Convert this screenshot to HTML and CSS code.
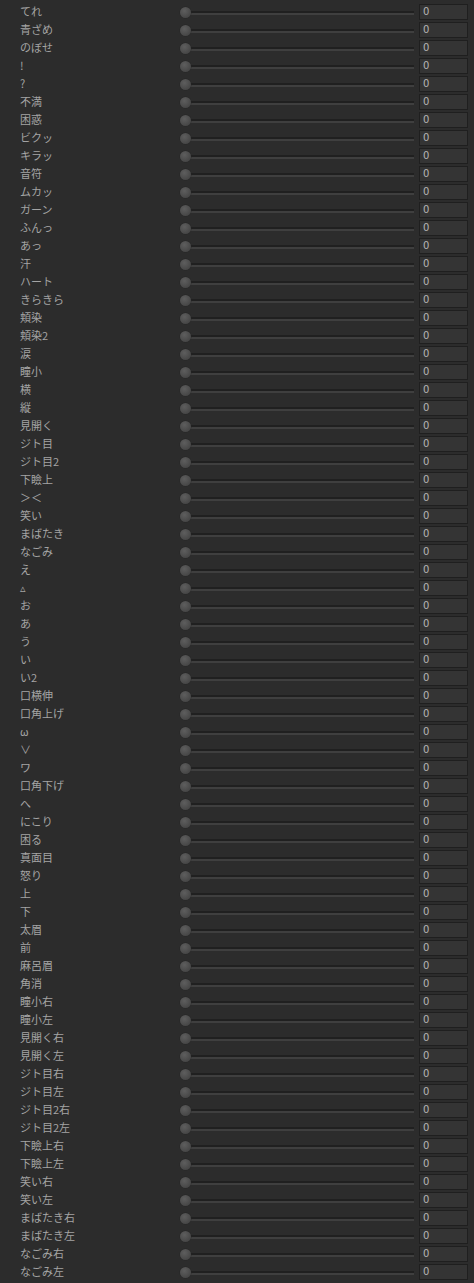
FILE: index.html
```html
<!DOCTYPE html>
<html lang="ja">
<head>
<meta charset="utf-8">
<link rel="stylesheet" href="styles.css">
</head>
<body>
<div class="list" id="list"></div>
<script>
const names = ["てれ","青ざめ","のぼせ","!","?","不満","困惑","ビクッ","キラッ","音符","ムカッ","ガーン","ふんっ","あっ","汗","ハート","きらきら","頬染","頬染2","涙","瞳小","横","縦","見開く","ジト目","ジト目2","下瞼上","＞＜","笑い","まばたき","なごみ","え","▵","お","あ","う","い","い2","口横伸","口角上げ","ω","∨","ワ","口角下げ","へ","にこり","困る","真面目","怒り","上","下","太眉","前","麻呂眉","角消","瞳小右","瞳小左","見開く右","見開く左","ジト目右","ジト目左","ジト目2右","ジト目2左","下瞼上右","下瞼上左","笑い右","笑い左","まばたき右","まばたき左","なごみ右","なごみ左"];
const list = document.getElementById('list');
for (const n of names) {
  const row = document.createElement('div');
  row.className = 'row';
  row.innerHTML = '<span class="label"></span><div class="slider"><span class="knob"></span><span class="track"></span></div><div class="value">0</div>';
  row.querySelector('.label').textContent = n;
  list.appendChild(row);
}
</script>
</body>
</html>
```
FILE: styles.css
```css
html, body {
  margin: 0;
  padding: 0;
  background: #2c2c2c;
}
body {
  font-family: "Noto Sans CJK JP", "DejaVu Sans", sans-serif;
  font-size: 11px;
  color: #a4a4a4;
}
.list {
  padding-top: 3px;
  display: flex;
  flex-direction: column;
}
.row {
  display: flex;
  align-items: center;
  height: 18px;
}
.label {
  box-sizing: border-box;
  width: 180px;
  padding-left: 20px;
  padding-bottom: 2px;
  line-height: 16px;
  white-space: nowrap;
  overflow: hidden;
}
.slider {
  width: 234px;
  height: 18px;
  display: flex;
  align-items: center;
}
.knob {
  flex: 0 0 auto;
  width: 11px;
  height: 11px;
  border-radius: 50%;
  background: radial-gradient(circle at 40% 35%, #5e5e5e 0%, #4c4c4c 55%, #3d3d3d 100%);
  box-shadow: 0 0 0 0.5px #262626;
  position: relative;
  z-index: 1;
}
.track {
  flex: 1;
  height: 4px;
  margin-left: -1px;
  margin-top: 1px;
  background: linear-gradient(#202020 0, #202020 2px, #3f3f3f 2px, #3f3f3f 4px);
}
.value {
  box-sizing: border-box;
  width: 49px;
  height: 16px;
  margin-left: 5px;
  border: 1px solid #1f1f1f;
  background: #343434;
  color: #b4b4b4;
  padding-left: 3px;
  line-height: 14px;
  font-family: "DejaVu Sans", sans-serif;
  font-size: 10px;
}
```
